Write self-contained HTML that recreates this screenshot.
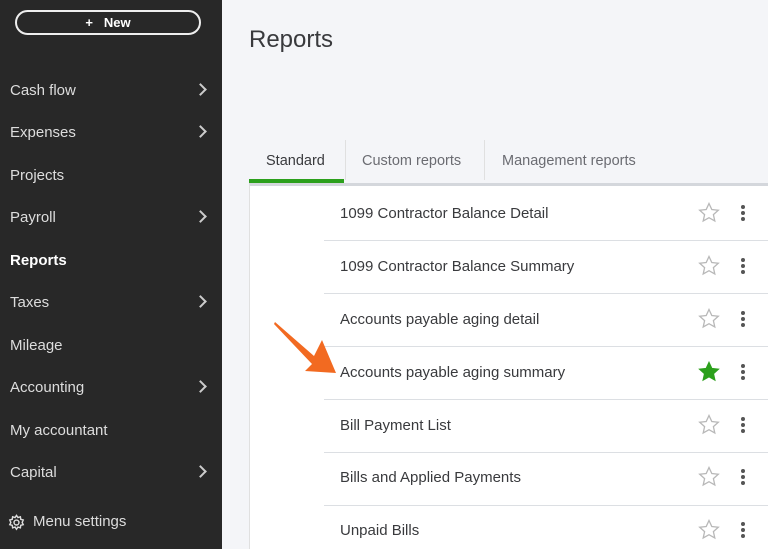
<!DOCTYPE html>
<html><head><style>
*{margin:0;padding:0;box-sizing:border-box}
html,body{width:768px;height:549px;overflow:hidden}
body{background:#f4f5f8;font-family:"Liberation Sans",sans-serif;position:relative}
#sb{position:absolute;left:0;top:0;width:222px;height:549px;background:#282828;color:#e4e4e4}
.new{position:absolute;left:15px;top:10px;width:186px;height:25px;border:2px solid #eee;border-radius:13px;color:#fff;font-size:13px;font-weight:bold;text-align:center;line-height:21px}
.nav{position:absolute;left:10px;font-size:15px;color:#ddd}
.chev{position:absolute;left:196px;width:9px;height:9px;border-top:2px solid #ccc;border-right:2px solid #ccc;transform:rotate(45deg)}
h1{position:absolute;left:249px;top:26px;font-size:24px;font-weight:normal;color:#393a3d}
.tab{position:absolute;top:140px;height:43px;line-height:43px;font-size:14.5px;color:#6b6c72}
#card{position:absolute;left:249px;top:183px;width:530px;height:366px;background:#fff;border-left:1px solid #e0e0e0;border-top:3px solid #d4d7dc}
.row{position:absolute;left:340px;font-size:15px;color:#393a3d}
.sep{position:absolute;left:324px;width:444px;height:1px;background:#dcdfe3}
.star{position:absolute;left:698px}
.dots{position:absolute;left:741px;width:4px}
.dots i{display:block;width:4px;height:4px;border-radius:2px;background:#555;margin-bottom:2px}
</style></head><body>
<div id="sb">
<div class="new">+&nbsp;&nbsp; New</div>
<div class="nav" style="top:82px">Cash flow</div><div class="chev" style="top:85px"></div>
<div class="nav" style="top:124px">Expenses</div><div class="chev" style="top:127px"></div>
<div class="nav" style="top:167px">Projects</div>
<div class="nav" style="top:209px">Payroll</div><div class="chev" style="top:212px"></div>
<div class="nav" style="top:252px;font-weight:bold;color:#fff">Reports</div>
<div class="nav" style="top:294px">Taxes</div><div class="chev" style="top:297px"></div>
<div class="nav" style="top:337px">Mileage</div>
<div class="nav" style="top:379px">Accounting</div><div class="chev" style="top:382px"></div>
<div class="nav" style="top:422px">My accountant</div>
<div class="nav" style="top:464px">Capital</div><div class="chev" style="top:467px"></div>
<svg style="position:absolute;left:8px;top:514px" width="17" height="17" viewBox="0 0 24 24" fill="none" stroke="#ddd" stroke-width="2"><circle cx="12" cy="12" r="3.5"/><path d="M12 2l2 3 3.5-1 .5 3.5 3.5 1-1.5 3.5 1.5 3-3.5 1-.5 3.5-3.5-1-2 3-2-3-3.5 1-.5-3.5-3.5-1 1.5-3-1.5-3.5 3.5-1 .5-3.5 3.5 1z"/></svg>
<div class="nav" style="top:513px;left:33px">Menu settings</div>
</div>
<h1>Reports</h1>
<div class="tab" style="left:266px;color:#393a3d">Standard</div>
<div style="position:absolute;left:249px;top:179px;width:95px;height:4px;background:#2ca01c;z-index:2"></div>
<div style="position:absolute;left:345px;top:140px;width:1px;height:40px;background:#e0e0e0"></div>
<div class="tab" style="left:362px">Custom reports</div>
<div style="position:absolute;left:484px;top:140px;width:1px;height:40px;background:#e0e0e0"></div>
<div class="tab" style="left:502px">Management reports</div>
<div id="card"></div>
<div class="row" style="top:205px">1099 Contractor Balance Detail</div>
<div class="sep" style="top:240px"></div>
<div class="row" style="top:258px">1099 Contractor Balance Summary</div>
<div class="sep" style="top:293px"></div>
<div class="row" style="top:311px">Accounts payable aging detail</div>
<div class="sep" style="top:346px"></div>
<div class="row" style="top:364px">Accounts payable aging summary</div>
<div class="sep" style="top:399px"></div>
<div class="row" style="top:417px">Bill Payment List</div>
<div class="sep" style="top:452px"></div>
<div class="row" style="top:469px">Bills and Applied Payments</div>
<div class="sep" style="top:505px"></div>
<div class="row" style="top:522px">Unpaid Bills</div>
<svg width="0" height="0" style="position:absolute"><defs><path id="st" d="M11 1.5l2.8 6 6.5.7-4.9 4.4 1.4 6.4L11 15.7l-5.8 3.3 1.4-6.4L1.7 8.2l6.5-.7z"/></defs></svg>
<svg class="star" style="top:202px" width="22" height="22"><use href="#st" fill="none" stroke="#b8b8b8" stroke-width="1.3"/></svg>
<svg class="star" style="top:255px" width="22" height="22"><use href="#st" fill="none" stroke="#b8b8b8" stroke-width="1.3"/></svg>
<svg class="star" style="top:308px" width="22" height="22"><use href="#st" fill="none" stroke="#b8b8b8" stroke-width="1.3"/></svg>
<svg class="star" style="top:361px" width="22" height="22"><use href="#st" fill="#2ca01c" stroke="#2ca01c" stroke-width="1.3"/></svg>
<svg class="star" style="top:414px" width="22" height="22"><use href="#st" fill="none" stroke="#b8b8b8" stroke-width="1.3"/></svg>
<svg class="star" style="top:466px" width="22" height="22"><use href="#st" fill="none" stroke="#b8b8b8" stroke-width="1.3"/></svg>
<svg class="star" style="top:519px" width="22" height="22"><use href="#st" fill="none" stroke="#b8b8b8" stroke-width="1.3"/></svg>
<div class="dots" style="top:205px"><i></i><i></i><i></i></div>
<div class="dots" style="top:258px"><i></i><i></i><i></i></div>
<div class="dots" style="top:311px"><i></i><i></i><i></i></div>
<div class="dots" style="top:364px"><i></i><i></i><i></i></div>
<div class="dots" style="top:417px"><i></i><i></i><i></i></div>
<div class="dots" style="top:469px"><i></i><i></i><i></i></div>
<div class="dots" style="top:522px"><i></i><i></i><i></i></div>
<svg style="position:absolute;left:270px;top:316px" width="72" height="62"><path d="M5 6 L44 40 L52 24 L66 57 L35 55 L42 48 L4 8 Z" fill="#f26a21"/></svg>
</body></html>
